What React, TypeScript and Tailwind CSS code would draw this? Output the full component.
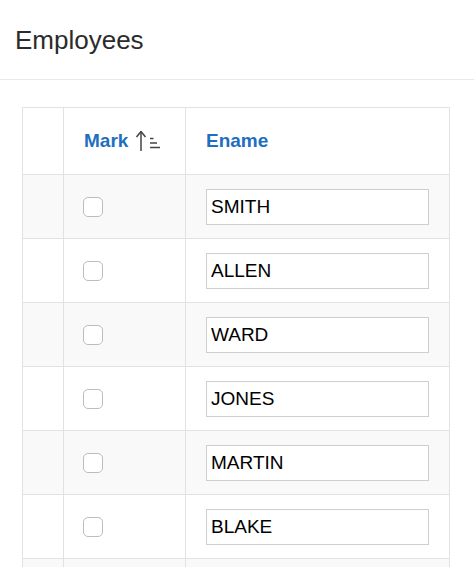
const rows = ['SMITH', 'ALLEN', 'WARD', 'JONES', 'MARTIN', 'BLAKE', 'CLARK'];

function SortAscIcon() {
  return (
    <svg width="26" height="24" viewBox="0 0 26 24" fill="none" stroke="#444" strokeWidth={1.5}>
      <path d="M6 22V2.5" />
      <path d="M1.5 8L6 2.5l4.5 5.5" strokeLinejoin="round" />
      <path d="M15 9.5h3.5" />
      <path d="M15 14h7" />
      <path d="M15 18.5h10" />
    </svg>
  );
}

export default function App() {
  return (
    <div className="min-h-screen bg-white font-['Liberation_Sans',Arial,sans-serif] overflow-hidden">
      <div className="h-[80px] border-b border-[#e8e8e8] pl-[15px] pt-[25px]">
        <h1 className="text-[26px] leading-[30px] text-[#2b2b2b] font-normal">Employees</h1>
      </div>

      <div className="ml-[22px] mt-[27px] w-[428px] border-l border-t border-[#e2e2e2]">
        <div className="grid grid-cols-[41px_122px_264px] h-[67px] bg-white">
          <div className="border-r border-b border-[#e2e2e2]" />
          <div className="border-r border-b border-[#e2e2e2] flex items-center pl-[20px] gap-[7px]">
            <span className="text-[19px] font-bold text-[#1f6fbf]">Mark</span>
            <SortAscIcon />
          </div>
          <div className="border-r border-b border-[#e2e2e2] flex items-center pl-[20px]">
            <span className="text-[19px] font-bold text-[#1f6fbf]">Ename</span>
          </div>
        </div>

        {rows.map((name, i) => (
          <div
            key={name}
            className={`grid grid-cols-[41px_122px_264px] h-[64px] ${i % 2 === 0 ? 'bg-[#f9f9f9]' : 'bg-white'}`}
          >
            <div className="border-r border-b border-[#e2e2e2]" />
            <div className="border-r border-b border-[#e2e2e2] flex items-center pl-[19px]">
              <input
                type="checkbox"
                className="appearance-none w-[20px] h-[20px] rounded-[5px] border border-[#bdbdbd] bg-white"
              />
            </div>
            <div className="border-r border-b border-[#e2e2e2] flex items-center px-[20px]">
              <input
                type="text"
                defaultValue={name}
                className="w-full h-[36px] border border-[#cfcfcf] bg-white pl-[4px] text-[19px] text-black outline-none"
              />
            </div>
          </div>
        ))}
      </div>
    </div>
  );
}
